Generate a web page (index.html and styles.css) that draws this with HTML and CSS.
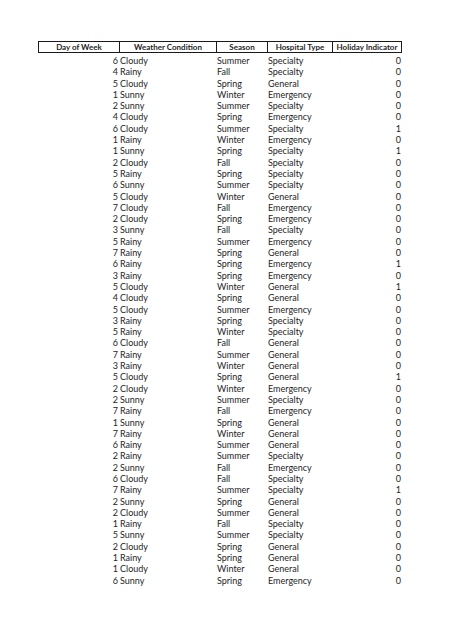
FILE: index.html
```html
<!DOCTYPE html>
<html>
<head>
<meta charset="utf-8">
<link rel="stylesheet" href="styles.css">
</head>
<body>
<div class="sheet">
  <div class="row head">
    <div class="c">Day of Week</div>
    <div class="c">Weather Condition</div>
    <div class="c">Season</div>
    <div class="c">Hospital Type</div>
    <div class="c">Holiday Indicator</div>
  </div>
  <div class="rows" id="rows">
    <div class="row"><div class="n">6</div><div class="t">Cloudy</div><div class="t">Summer</div><div class="t">Specialty</div><div class="n">0</div></div>
    <div class="row"><div class="n">4</div><div class="t">Rainy</div><div class="t">Fall</div><div class="t">Specialty</div><div class="n">0</div></div>
    <div class="row"><div class="n">5</div><div class="t">Cloudy</div><div class="t">Spring</div><div class="t">General</div><div class="n">0</div></div>
    <div class="row"><div class="n">1</div><div class="t">Sunny</div><div class="t">Winter</div><div class="t">Emergency</div><div class="n">0</div></div>
    <div class="row"><div class="n">2</div><div class="t">Sunny</div><div class="t">Summer</div><div class="t">Specialty</div><div class="n">0</div></div>
    <div class="row"><div class="n">4</div><div class="t">Cloudy</div><div class="t">Spring</div><div class="t">Emergency</div><div class="n">0</div></div>
    <div class="row"><div class="n">6</div><div class="t">Cloudy</div><div class="t">Summer</div><div class="t">Specialty</div><div class="n">1</div></div>
    <div class="row"><div class="n">1</div><div class="t">Rainy</div><div class="t">Winter</div><div class="t">Emergency</div><div class="n">0</div></div>
    <div class="row"><div class="n">1</div><div class="t">Sunny</div><div class="t">Spring</div><div class="t">Specialty</div><div class="n">1</div></div>
    <div class="row"><div class="n">2</div><div class="t">Cloudy</div><div class="t">Fall</div><div class="t">Specialty</div><div class="n">0</div></div>
    <div class="row"><div class="n">5</div><div class="t">Rainy</div><div class="t">Spring</div><div class="t">Specialty</div><div class="n">0</div></div>
    <div class="row"><div class="n">6</div><div class="t">Sunny</div><div class="t">Summer</div><div class="t">Specialty</div><div class="n">0</div></div>
    <div class="row"><div class="n">5</div><div class="t">Cloudy</div><div class="t">Winter</div><div class="t">General</div><div class="n">0</div></div>
    <div class="row"><div class="n">7</div><div class="t">Cloudy</div><div class="t">Fall</div><div class="t">Emergency</div><div class="n">0</div></div>
    <div class="row"><div class="n">2</div><div class="t">Cloudy</div><div class="t">Spring</div><div class="t">Emergency</div><div class="n">0</div></div>
    <div class="row"><div class="n">3</div><div class="t">Sunny</div><div class="t">Fall</div><div class="t">Specialty</div><div class="n">0</div></div>
    <div class="row"><div class="n">5</div><div class="t">Rainy</div><div class="t">Summer</div><div class="t">Emergency</div><div class="n">0</div></div>
    <div class="row"><div class="n">7</div><div class="t">Rainy</div><div class="t">Spring</div><div class="t">General</div><div class="n">0</div></div>
    <div class="row"><div class="n">6</div><div class="t">Rainy</div><div class="t">Spring</div><div class="t">Emergency</div><div class="n">1</div></div>
    <div class="row"><div class="n">3</div><div class="t">Rainy</div><div class="t">Spring</div><div class="t">Emergency</div><div class="n">0</div></div>
    <div class="row"><div class="n">5</div><div class="t">Cloudy</div><div class="t">Winter</div><div class="t">General</div><div class="n">1</div></div>
    <div class="row"><div class="n">4</div><div class="t">Cloudy</div><div class="t">Spring</div><div class="t">General</div><div class="n">0</div></div>
    <div class="row"><div class="n">5</div><div class="t">Cloudy</div><div class="t">Summer</div><div class="t">Emergency</div><div class="n">0</div></div>
    <div class="row"><div class="n">3</div><div class="t">Rainy</div><div class="t">Spring</div><div class="t">Specialty</div><div class="n">0</div></div>
    <div class="row"><div class="n">5</div><div class="t">Rainy</div><div class="t">Winter</div><div class="t">Specialty</div><div class="n">0</div></div>
    <div class="row"><div class="n">6</div><div class="t">Cloudy</div><div class="t">Fall</div><div class="t">General</div><div class="n">0</div></div>
    <div class="row"><div class="n">7</div><div class="t">Rainy</div><div class="t">Summer</div><div class="t">General</div><div class="n">0</div></div>
    <div class="row"><div class="n">3</div><div class="t">Rainy</div><div class="t">Winter</div><div class="t">General</div><div class="n">0</div></div>
    <div class="row"><div class="n">5</div><div class="t">Cloudy</div><div class="t">Spring</div><div class="t">General</div><div class="n">1</div></div>
    <div class="row"><div class="n">2</div><div class="t">Cloudy</div><div class="t">Winter</div><div class="t">Emergency</div><div class="n">0</div></div>
    <div class="row"><div class="n">2</div><div class="t">Sunny</div><div class="t">Summer</div><div class="t">Specialty</div><div class="n">0</div></div>
    <div class="row"><div class="n">7</div><div class="t">Rainy</div><div class="t">Fall</div><div class="t">Emergency</div><div class="n">0</div></div>
    <div class="row"><div class="n">1</div><div class="t">Sunny</div><div class="t">Spring</div><div class="t">General</div><div class="n">0</div></div>
    <div class="row"><div class="n">7</div><div class="t">Rainy</div><div class="t">Winter</div><div class="t">General</div><div class="n">0</div></div>
    <div class="row"><div class="n">6</div><div class="t">Rainy</div><div class="t">Summer</div><div class="t">General</div><div class="n">0</div></div>
    <div class="row"><div class="n">2</div><div class="t">Rainy</div><div class="t">Summer</div><div class="t">Specialty</div><div class="n">0</div></div>
    <div class="row"><div class="n">2</div><div class="t">Sunny</div><div class="t">Fall</div><div class="t">Emergency</div><div class="n">0</div></div>
    <div class="row"><div class="n">6</div><div class="t">Cloudy</div><div class="t">Fall</div><div class="t">Specialty</div><div class="n">0</div></div>
    <div class="row"><div class="n">7</div><div class="t">Rainy</div><div class="t">Summer</div><div class="t">Specialty</div><div class="n">1</div></div>
    <div class="row"><div class="n">2</div><div class="t">Sunny</div><div class="t">Spring</div><div class="t">General</div><div class="n">0</div></div>
    <div class="row"><div class="n">2</div><div class="t">Cloudy</div><div class="t">Summer</div><div class="t">General</div><div class="n">0</div></div>
    <div class="row"><div class="n">1</div><div class="t">Rainy</div><div class="t">Fall</div><div class="t">Specialty</div><div class="n">0</div></div>
    <div class="row"><div class="n">5</div><div class="t">Sunny</div><div class="t">Summer</div><div class="t">Specialty</div><div class="n">0</div></div>
    <div class="row"><div class="n">2</div><div class="t">Cloudy</div><div class="t">Spring</div><div class="t">General</div><div class="n">0</div></div>
    <div class="row"><div class="n">1</div><div class="t">Rainy</div><div class="t">Spring</div><div class="t">General</div><div class="n">0</div></div>
    <div class="row"><div class="n">1</div><div class="t">Cloudy</div><div class="t">Winter</div><div class="t">General</div><div class="n">0</div></div>
    <div class="row"><div class="n">6</div><div class="t">Sunny</div><div class="t">Spring</div><div class="t">Emergency</div><div class="n">0</div></div>
  </div>
</div>
</body>
</html>
```
FILE: styles.css
```css
html, body {
  margin: 0;
  padding: 0;
  background: #ffffff;
}
body {
  font-family: Lato, "Open Sans", sans-serif;
  font-size: 9px;
  color: #1e1e1e;
}
.sheet {
  padding: 41px 0 0 38px;
}
.row {
  display: grid;
  grid-template-columns: 81px 97px 51px 65px 70px;
  height: 11.3px;
  line-height: 11.3px;
  white-space: nowrap;
}
.row.head {
  width: 364px;
  box-sizing: border-box;
  height: 12px;
  line-height: 10px;
  border: 1px solid #1a1a1a;
  font-weight: bold;
  font-size: 8px;
  grid-template-columns: 80px 97px 51px 65px 69px;
}
.head .c {
  text-align: center;
  border-left: 1px solid #1a1a1a;
}
.head .c:first-child {
  border-left: none;
}
.rows {
  padding-top: 2px;
}
.n {
  text-align: right;
  padding-right: 1px;
}
.t {
  text-align: left;
  padding-left: 1px;
}
```
